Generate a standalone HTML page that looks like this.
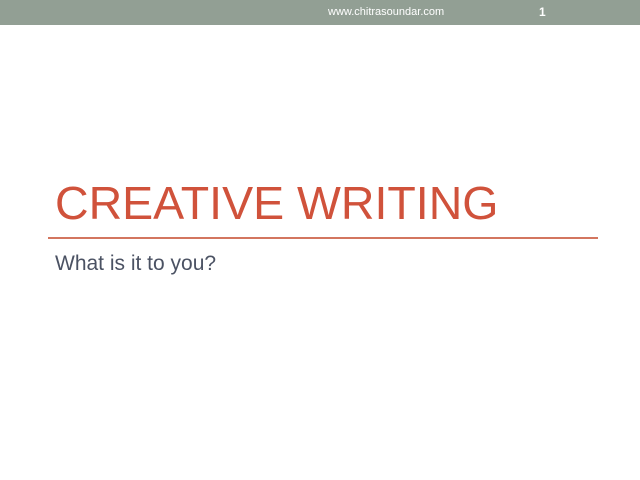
<!DOCTYPE html>
<html><head><style>
html,body{margin:0;padding:0;width:640px;height:480px;background:#fff;overflow:hidden;font-family:"Liberation Sans",Arial,sans-serif;}
.bar{position:absolute;left:0;top:0;width:640px;height:25px;background:#929f94;}
.url{position:absolute;left:328px;top:6px;font-size:11px;color:#fff;}
.num{position:absolute;left:539px;top:5px;font-size:12px;font-weight:bold;color:#fff;}
.title{position:absolute;left:55px;top:176px;font-size:46.5px;color:#d0523b;white-space:nowrap;}
.line{position:absolute;left:48px;top:237px;width:550px;height:2px;background:#d3765f;}
.sub{position:absolute;left:55px;top:252px;font-size:21px;color:#4b5263;}
</style></head><body>
<div class="bar"><span class="url">www.chitrasoundar.com</span><span class="num">1</span></div>
<div class="title">CREATIVE WRITING</div>
<div class="line"></div>
<div class="sub">What is it to you?</div>
</body></html>
